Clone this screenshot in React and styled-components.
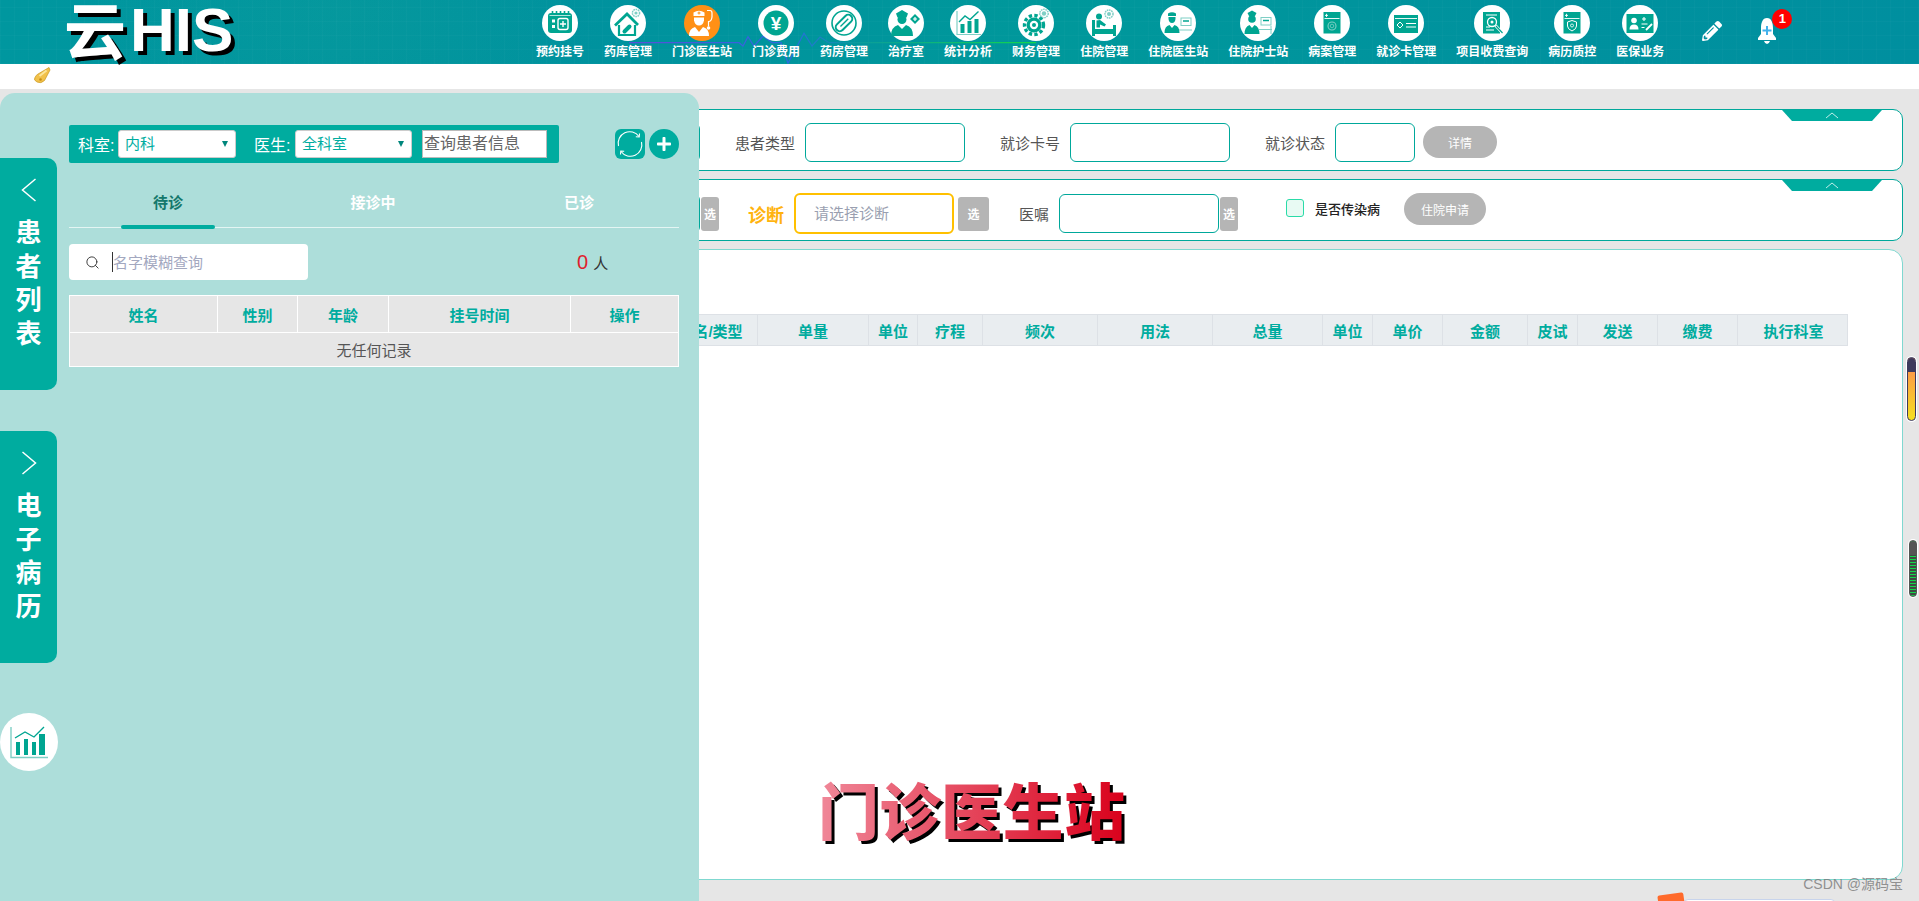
import React from 'react';
import styled, { createGlobalStyle } from 'styled-components';
import { FaPencilAlt, FaPlus } from 'react-icons/fa';
import { Search } from 'lucide-react';

const TEAL = '#00ac9f';
const ICON = '#00a591';
const SOFT = '#7fcfc5';
const FONT = '"Liberation Sans", "Noto Sans CJK SC", sans-serif';

const GlobalStyle = createGlobalStyle`
  html, body {
    margin: 0;
    height: 100%;
    overflow: hidden;
    background: #e6e6e6;
  }
  #root {
    height: 100%;
  }
  * {
    box-sizing: border-box;
  }
`;

const Page = styled.div`
  position: relative;
  height: 100vh;
  display: flex;
  flex-direction: column;
  overflow: hidden;
  font-family: ${FONT};
  background: #e6e6e6;
`;

/* ---- header ---- */
const Header = styled.header`
  position: relative;
  flex: none;
  height: 64px;
  display: flex;
  padding-left: 65px;
  background:
    repeating-linear-gradient(90deg, rgba(255, 255, 255, 0.018) 0 1px, transparent 1px 14px),
    repeating-linear-gradient(0deg, rgba(255, 255, 255, 0.018) 0 1px, transparent 1px 14px),
    radial-gradient(260px 160px at 345px 10px, rgba(30, 170, 150, 0.18), transparent),
    linear-gradient(100deg, #00979f 0%, #00929e 30%, #00989b 55%, #00929e 78%, #008f9f 100%);
`;

const Pulse = styled.svg`
  position: absolute;
  left: 0;
  top: 0;
  pointer-events: none;
`;

const Logo = styled.div`
  position: relative;
  width: 471px;
  flex: none;
  display: flex;
  align-items: flex-start;
  color: #fff;
  text-shadow: 4px 4px 0 #000;
  font-weight: 700;
`;

const LogoHan = styled.span`
  font-family: "Noto Sans CJK SC", sans-serif;
  font-size: 62px;
  line-height: 56px;
  margin-left: -1px;
`;

const LogoLatin = styled.span`
  font-family: "Liberation Sans", sans-serif;
  font-size: 62px;
  line-height: 60px;
  margin-left: 4px;
`;

const Nav = styled.nav`
  position: relative;
  display: flex;
  gap: 20px;
`;

const NavItem = styled.div`
  display: flex;
  flex-direction: column;
  align-items: center;
  padding-top: 5px;
`;

const NavDisc = styled.div`
  width: 36px;
  height: 36px;
  border-radius: 50%;
  background: ${(p) => (p.$active ? '#ff9015' : '#fff')};
  svg {
    display: block;
  }
`;

const NavLabel = styled.span`
  margin-top: 3px;
  font-size: 12px;
  line-height: 16px;
  font-weight: 700;
  color: #fff;
  white-space: nowrap;
`;

const Tools = styled.div`
  position: relative;
  display: flex;
  align-items: flex-start;
  margin-left: 38px;
`;

const PencilWrap = styled.div`
  margin-top: 21px;
  color: #fff;
  font-size: 20px;
  line-height: 0;
`;

const BellWrap = styled.div`
  position: relative;
  margin-top: 18px;
  margin-left: 35px;
  line-height: 0;
`;

const Badge = styled.span`
  position: absolute;
  left: 15px;
  top: -9px;
  width: 20px;
  height: 20px;
  border-radius: 50%;
  background: #f00;
  color: #fff;
  font-size: 13px;
  font-weight: 700;
  line-height: 20px;
  text-align: center;
`;

const Notice = styled.div`
  flex: none;
  height: 25px;
  padding: 3px 0 0 34px;
  background: #fff;
  line-height: 0;
`;

/* ---- work area behind the drawer ---- */
const Work = styled.div`
  position: relative;
  flex: 1;
  min-height: 0;
`;

const Main = styled.main`
  height: 100%;
  display: flex;
  flex-direction: column;
  gap: 8px;
  padding: 20px 16px 0 600px;
`;

const FormCard = styled.section`
  position: relative;
  flex: none;
  height: 62px;
  display: flex;
  align-items: center;
  padding-left: 19px;
  padding-top: ${(p) => p.$pt}px;
  background: #fff;
  border: 1px solid #00a89b;
  border-radius: 10px;
`;

const Collapse = styled.div`
  position: absolute;
  top: 0;
  right: 20px;
  width: 100px;
  height: 11px;
  display: flex;
  justify-content: center;
  background: ${TEAL};
  clip-path: polygon(0 0, 100% 0, 90% 100%, 10% 100%);
`;

const Field = styled.div`
  display: flex;
  align-items: center;
  margin-left: ${(p) => p.$ml || 0}px;
`;

const FieldLabel = styled.label`
  margin-right: 10px;
  font-size: 15px;
  color: #555;
  white-space: nowrap;
`;

const DiagnosisLabel = styled(FieldLabel)`
  font-size: 18px;
  font-weight: 700;
  color: #ffb30f;
`;

const TextBox = styled.input`
  width: ${(p) => p.$w}px;
  height: 39px;
  padding: 0 18px;
  background: #fff;
  border: 1px solid #00a89b;
  border-radius: 6px;
  outline: none;
  font-family: ${FONT};
  font-size: 15px;
`;

const DiagnosisBox = styled(TextBox)`
  height: 41px;
  border: 2px solid #ffc000;
  &::placeholder {
    color: #9a9fb0;
    opacity: 1;
  }
`;

const PickButton = styled.button`
  width: ${(p) => p.$w}px;
  height: 34px;
  margin-left: ${(p) => p.$ml}px;
  padding: 0;
  border: 0;
  border-radius: 3px;
  background: #b5b5b5;
  color: #fff;
  font-family: ${FONT};
  font-size: 12px;
  font-weight: 700;
`;

const PillButton = styled.button`
  width: ${(p) => p.$w}px;
  height: 32px;
  margin-left: ${(p) => p.$ml}px;
  margin-top: ${(p) => p.$mt || 0}px;
  padding: 0;
  border: 0;
  border-radius: 16px;
  background: #b5b5b5;
  color: #fff;
  font-family: ${FONT};
  font-size: 12px;
`;

const CheckRow = styled.div`
  display: flex;
  align-items: center;
  gap: 11px;
  margin-left: 48px;
  margin-top: -11px;
  font-size: 13px;
  color: #222;
  font-weight: 500;
  white-space: nowrap;
`;

const CheckBox = styled.span`
  width: 18px;
  height: 18px;
  background: #e8faf3;
  border: 1px solid #2adba8;
  border-radius: 3px;
`;

const ListCard = styled.section`
  position: relative;
  flex: 1;
  min-height: 0;
  padding: 64px 0 0 62px;
  background: #fff;
  border: 1px solid #7fd8d0;
  border-radius: 14px;
`;

const OrderHead = styled.div`
  display: grid;
  grid-template-columns: 94px 111px 49px 65px 115px 115px 110px 50px 70px 85px 50px 80px 80px 111px;
  width: 1185px;
  height: 32px;
  background: #e9edf0;
  border: 1px solid #dde1e6;
`;

const OrderCol = styled.div`
  display: flex;
  align-items: center;
  justify-content: center;
  border-right: 1px solid #dde1e6;
  font-size: 15px;
  font-weight: 700;
  color: ${TEAL};
  white-space: nowrap;
  &:last-child {
    border-right: 0;
  }
`;

const Toast = styled.div`
  position: absolute;
  left: 217px;
  top: 523px;
  font-family: "Noto Sans CJK SC", sans-serif;
  font-size: 61px;
  line-height: 72px;
  letter-spacing: 0.5px;
  font-weight: 900;
  white-space: nowrap;
  color: transparent;
  background: linear-gradient(90deg, #f08899 0%, #d9001b 100%);
  -webkit-background-clip: text;
  background-clip: text;
  filter: drop-shadow(3px 3px 0 #000);
`;

const FooterPeek = styled.div`
  flex: none;
  height: 21px;
  margin-top: -8px;
  display: flex;
  justify-content: flex-end;
  align-items: flex-start;
  overflow: hidden;
  padding: 14px 68px 0 0;
`;

const PeekTag = styled.span`
  width: 26px;
  height: 12px;
  background: #ff6a2b;
  border-radius: 2px;
  transform: rotate(-8deg);
`;

const PeekBox = styled.span`
  width: 151px;
  height: 12px;
  margin-top: 5px;
  background: #fff;
  border: 1px solid #c8d4ec;
  border-radius: 4px;
`;

/* little gauges hanging on the right edge */
const Gauge = styled.div`
  position: absolute;
  width: ${(p) => p.$w}px;
  height: ${(p) => p.$h}px;
  right: ${(p) => p.$right}px;
  top: ${(p) => p.$top}px;
  border: 1px solid ${(p) => p.$edge};
  border-radius: 5px;
  background: ${(p) => p.$bg};
  box-shadow: 0 0 0 1px #fff;
  overflow: hidden;
`;

const GaugeCap = styled.div`
  height: ${(p) => p.$h}px;
  background: ${(p) => p.$bg};
`;

const Watermark = styled.div`
  position: absolute;
  right: 16px;
  bottom: 8px;
  font-size: 14px;
  line-height: 18px;
  color: rgba(120, 120, 120, 0.8);
  white-space: nowrap;
`;

/* ---- patient drawer ---- */
const Drawer = styled.aside`
  position: absolute;
  left: 0;
  top: 4px;
  bottom: 0;
  width: 699px;
  display: flex;
  background: #addeda;
  border-radius: 15px 15px 0 0;
`;

const Rail = styled.div`
  flex: none;
  width: 57px;
  display: flex;
  flex-direction: column;
  padding-top: 65px;
`;

const RailTab = styled.div`
  height: 232px;
  margin-bottom: ${(p) => p.$mb}px;
  display: flex;
  flex-direction: column;
  align-items: center;
  padding-top: 20px;
  background: ${TEAL};
  border-radius: 0 10px 10px 0;
  color: #fff;
`;

const RailText = styled.div`
  margin-top: ${(p) => p.$mt}px;
  width: 26px;
  font-size: 26px;
  line-height: 33.5px;
  font-weight: 700;
  text-align: center;
`;

const ChartDisc = styled.div`
  width: 58px;
  height: 58px;
  display: flex;
  align-items: center;
  justify-content: center;
  border-radius: 50%;
  background: #fff;
`;

const DrawerBody = styled.div`
  width: 610px;
  margin-left: 12px;
  padding-top: 32px;
`;

const FilterRow = styled.div`
  display: flex;
  align-items: center;
  justify-content: space-between;
`;

const FilterBar = styled.div`
  width: 490px;
  height: 38px;
  display: flex;
  align-items: center;
  padding-left: 9px;
  background: ${TEAL};
  border-radius: 2px;
  color: #fff;
  font-size: 15px;
  white-space: nowrap;
`;

const FilterLabel = styled.span`
  width: 36px;
  margin-right: ${(p) => p.$mr}px;
  margin-left: ${(p) => p.$ml || 0}px;
  font-size: 16px;
`;

const FakeSelect = styled.div`
  position: relative;
  width: ${(p) => p.$w}px;
  height: 28px;
  padding-left: 6px;
  background: #fff;
  border: 1px solid #ccc;
  border-radius: 3px;
  color: ${TEAL};
  line-height: 26px;
  &::after {
    content: '';
    position: absolute;
    right: 7px;
    top: 10px;
    border-left: 3px solid transparent;
    border-right: 3px solid transparent;
    border-top: 6px solid #00867c;
  }
`;

const QueryInput = styled.input`
  width: 125px;
  height: 28px;
  margin-left: 10px;
  padding: 0 1px;
  background: #fff;
  border: 1px solid #bbb;
  outline: none;
  font-family: ${FONT};
  font-size: 16px;
  &::placeholder {
    color: #666;
    opacity: 1;
  }
`;

const RoundButtons = styled.div`
  display: flex;
  gap: 4px;
`;

const IconButton = styled.button`
  width: 30px;
  height: 30px;
  display: flex;
  align-items: center;
  justify-content: center;
  padding: 0;
  border: 0;
  border-radius: ${(p) => (p.$round ? '50%' : '6px')};
  background: ${TEAL};
  color: #fff;
  font-size: 16px;
`;

const Tabs = styled.div`
  display: grid;
  grid-template-columns: 198px 212px 200px;
  height: 49px;
  margin-top: 16px;
  border-bottom: 1px solid #e4f5f3;
`;

const Tab = styled.div`
  position: relative;
  text-align: center;
  line-height: 48px;
  font-size: 15px;
  font-weight: 700;
  color: ${(p) => (p.$active ? '#14786c' : '#fff')};
  &::after {
    content: '';
    display: ${(p) => (p.$active ? 'block' : 'none')};
    position: absolute;
    left: 52px;
    bottom: -2px;
    width: 94px;
    height: 4px;
    border-radius: 2px;
    background: ${TEAL};
  }
`;

const SearchRow = styled.div`
  display: flex;
  align-items: center;
  margin-top: 16px;
`;

const SearchBox = styled.div`
  width: 239px;
  height: 36px;
  display: flex;
  align-items: center;
  padding-left: 16px;
  background: #fff;
  border-radius: 4px;
  color: #333;
`;

const Caret = styled.span`
  width: 1px;
  height: 20px;
  margin-left: 12px;
  background: #333;
`;

const SearchInput = styled.input`
  width: 170px;
  padding: 0;
  border: 0;
  outline: none;
  font-family: ${FONT};
  font-size: 15px;
  &::placeholder {
    color: #a3a8bf;
    opacity: 1;
  }
`;

const Counter = styled.div`
  margin-left: 269px;
  display: flex;
  align-items: baseline;
  gap: 5px;
  font-size: 15px;
  color: #333;
`;

const CounterNum = styled.span`
  font-size: 20px;
  color: #e0202c;
`;

const PatientTable = styled.table`
  width: 609px;
  margin-top: 15px;
  table-layout: fixed;
  border-collapse: collapse;
  background: #e6e6e6;
  font-size: 15px;
  th, td {
    padding: 0;
    border: 1px solid #fff;
    text-align: center;
  }
  th {
    height: 37px;
    color: ${TEAL};
    font-weight: 700;
  }
  td {
    height: 34px;
    color: #555;
  }
`;

/* ---- icons ---- */
const Svg = ({ children }) => (
  <svg width="36" height="36" viewBox="0 0 36 36" fill="none">
    {children}
  </svg>
);

const Ring = ({ cx, cy, r = 3.6 }) => (
  <>
    <circle cx={cx} cy={cy} r={r} stroke={SOFT} strokeWidth="1.5" strokeDasharray="1.6 0.7" />
    <circle cx={cx} cy={cy} r={r - 2} fill={SOFT} />
  </>
);

const icons = {
  calendar: (
    <Svg>
      <rect x="6" y="8" width="24" height="20" rx="3" fill={ICON} />
      <path d="M10.5 6v4M14.5 6v4M18.5 6v4M22.5 6v4M26.500 6v4" stroke={ICON} strokeWidth="1.6" />
      <path d="M7.500 10.500h21" stroke="#fff" strokeWidth="0.7" />
      <path d="M10 14.500h3v3h-3zM10 20h3v3h-3z" fill="#fff" />
      <rect x="16" y="13.500" width="10" height="11" rx="2" stroke="#fff" strokeWidth="1.4" />
      <path d="M21 16v6M18 19h6" stroke="#fff" strokeWidth="1.4" />
    </Svg>
  ),
  store: (
    <Svg>
      <path d="M5 20.500 17 9l11 11" stroke={ICON} strokeWidth="2.8" />
      <path d="M9 20v10h16V20" stroke={ICON} strokeWidth="2.2" />
      <path d="m14.500 26.500 5-5" stroke={ICON} strokeWidth="4" strokeLinecap="round" />
      <Ring cx={26} cy={8} />
    </Svg>
  ),
  doctor: (
    <Svg>
      <path d="M9.500 11V7.500q5.500-3.500 11 0V11z" fill="#fff" />
      <path d="M15 6.500v3M13.500 8h3" stroke="#ff9015" strokeWidth="1" />
      <path d="M10 12.500h10v3q-1 5-5 5t-5-5z" fill="#fff" />
      <path d="M5 31q0-7.500 6-9l4 5 4-5q6 1.500 6 9z" fill="#fff" />
      <path d="M23 5.500h3q2 0 2 2.500v4q-.5 4.500-3.500 4.500v5" stroke="#fff" strokeWidth="1.2" />
      <circle cx="24.500" cy="23" r="1.800" fill="#fff" />
    </Svg>
  ),
  money: (
    <Svg>
      <circle cx="18" cy="18" r="12.500" fill={ICON} />
      <text x="18" y="24.500" textAnchor="middle" fontSize="19" fontWeight="700" fontFamily="Liberation Sans" fill="#fff">
        ¥
      </text>
    </Svg>
  ),
  pill: (
    <Svg>
      <circle cx="18" cy="18" r="12" stroke={ICON} strokeWidth="1.6" />
      <g transform="rotate(45 18 18)">
        <rect x="14" y="8" width="8" height="20" rx="4" stroke={ICON} strokeWidth="2" />
        <path d="M18 12v11" stroke={ICON} strokeWidth="1.4" />
      </g>
    </Svg>
  ),
  nurse: (
    <Svg>
      <path d="M8 8.500 14 5l6 3.500-1.500 4h-9z" fill={ICON} />
      <circle cx="14" cy="14.500" r="4.500" fill={ICON} />
      <path d="M3 31q0-9 7-11l4 4 4-4q7 2 7 11z" fill={ICON} />
      <path d="m27 9 5 5-5 5-5-5z" fill={ICON} />
      <path d="M27 12v4M25 14h4" stroke="#fff" strokeWidth="1.2" />
    </Svg>
  ),
  chart: (
    <Svg>
      <path d="M7 6v23.500h24" stroke={SOFT} strokeWidth="1.2" />
      <path d="M10.500 19h4v9h-4zM17.500 16h4v12h-4zM24.500 14h4v14h-4z" fill={ICON} />
      <path d="m9 17 6-6 5 3.500 8.500-8" stroke={ICON} strokeWidth="1.4" />
    </Svg>
  ),
  finance: (
    <Svg>
      <circle cx="16" cy="20" r="9.500" stroke={ICON} strokeWidth="3.400" strokeDasharray="3.300 2.300" />
      <circle cx="16" cy="20" r="7.500" fill={ICON} />
      <circle cx="16" cy="20" r="4.200" fill="#fff" />
      <circle cx="16" cy="20" r="2" fill={ICON} />
      <Ring cx={26} cy={8.500} r={4.200} />
    </Svg>
  ),
  ward: (
    <Svg>
      <path d="M6 15h3v16H6zM27 20h3v11h-3zM9 24h18v5H9z" fill={ICON} />
      <circle cx="13" cy="11.500" r="3" fill={ICON} />
      <path d="M10.500 15.500 14 15l6 4.500-1.500 2-4.500-2v3h-3.500z" fill={ICON} />
      <Ring cx={23} cy={9} r={4} />
    </Svg>
  ),
  wardDoctor: (
    <Svg>
      <path d="M8 8.500q4-2.500 8 0V11H8z" fill={ICON} />
      <path d="M8.500 12h7v2q-.5 4-3.500 4t-3.500-4z" fill={ICON} />
      <path d="M4.500 28q0-7 5-8l2.500 3 2.500-3q5 1 5 8z" fill={ICON} />
      <rect x="21" y="13" width="10" height="7.500" stroke={SOFT} strokeWidth="1" />
      <path d="M23 16h6" stroke={ICON} strokeWidth="1.500" />
      <path d="M19 25h13" stroke={SOFT} strokeWidth="1" />
    </Svg>
  ),
  wardNurse: (
    <Svg>
      <path d="M7.500 8 12 5.500 16.500 8 15 11H9z" fill={ICON} />
      <circle cx="12" cy="14" r="3.800" fill={ICON} />
      <path d="M4.500 29q0-7 5-9l2.500 3 2.500-3q5 2 5 9z" fill={ICON} />
      <rect x="21" y="12.500" width="10" height="7.500" stroke={SOFT} strokeWidth="1" />
      <path d="M23 15.500h6" stroke={ICON} strokeWidth="1.500" />
      <path d="M19 24.500h13M31 21v8" stroke={SOFT} strokeWidth="1" />
    </Svg>
  ),
  record: (
    <Svg>
      <rect x="9.500" y="7" width="17" height="21.500" fill={ICON} />
      <path d="M12.500 8.800v3.200M11 10.400h3M10.500 13.500h15" stroke="#fff" strokeWidth="0.9" />
      <circle cx="18" cy="21" r="4" stroke={SOFT} strokeWidth="1.100" />
      <circle cx="18" cy="21" r="1.800" stroke={SOFT} strokeWidth="0.8" />
    </Svg>
  ),
  card: (
    <Svg>
      <rect x="6" y="10" width="24" height="18" fill={ICON} />
      <path d="M7 13.500h22" stroke="#fff" strokeWidth="0.9" />
      <path d="m12 17 3 3-3 3-3-3z" stroke="#fff" strokeWidth="1" />
      <path d="M18 18.500h10M18 22h10" stroke="#fff" strokeWidth="1.200" />
    </Svg>
  ),
  query: (
    <Svg>
      <rect x="9" y="7" width="17" height="21.500" fill={ICON} />
      <path d="M12 10h11M12 25h8M12 22h4" stroke="#fff" strokeWidth="1" />
      <circle cx="18" cy="17" r="4.500" stroke="#fff" strokeWidth="1.300" />
      <circle cx="18" cy="17" r="1.500" fill="#fff" />
      <path d="m21.500 20.500 7 7.500" stroke="#fff" strokeWidth="2.600" />
      <path d="m22 21 6.500 7" stroke={ICON} strokeWidth="1.200" />
    </Svg>
  ),
  shield: (
    <Svg>
      <rect x="9.500" y="7" width="17" height="21.500" fill={ICON} />
      <path d="M12.500 8.800v3.200M11 10.400h3M10.500 13.500h15" stroke="#fff" strokeWidth="0.9" />
      <path d="M18 15.500 22.500 17v4q0 3-4.500 5-4.500-2-4.500-5v-4z" stroke="#fff" strokeWidth="1" />
      <circle cx="18" cy="20.500" r="1.500" stroke="#fff" strokeWidth="0.8" />
    </Svg>
  ),
  insurance: (
    <Svg>
      <rect x="4.500" y="9" width="27" height="19" fill={ICON} />
      <circle cx="12" cy="15.500" r="2.800" fill="#fff" />
      <path d="M7.500 24.500q0-5 4.500-5t4.500 5z" fill="#fff" />
      <path d="M22 12v4M20 14h4M19.500 19h6M19.500 22.500h3" stroke="#fff" strokeWidth="1.100" />
      <path d="m24 25 6-6" stroke="#fff" strokeWidth="1.800" />
    </Svg>
  ),
};

const navItems = [
  ['预约挂号', 'calendar'],
  ['药库管理', 'store'],
  ['门诊医生站', 'doctor', true],
  ['门诊费用', 'money'],
  ['药房管理', 'pill'],
  ['治疗室', 'nurse'],
  ['统计分析', 'chart'],
  ['财务管理', 'finance'],
  ['住院管理', 'ward'],
  ['住院医生站', 'wardDoctor'],
  ['住院护士站', 'wardNurse'],
  ['病案管理', 'record'],
  ['就诊卡管理', 'card'],
  ['项目收费查询', 'query'],
  ['病历质控', 'shield'],
  ['医保业务', 'insurance'],
];

const orderCols = ['药名/类型', '单量', '单位', '疗程', '频次', '用法', '总量', '单位', '单价', '金额', '皮试', '发送', '缴费', '执行科室'];

const HeartLine = () => (
  <Pulse width="1100" height="64" fill="none">
    <defs>
      <linearGradient id="pulseStroke" gradientUnits="userSpaceOnUse" x1="629" y1="0" x2="1036" y2="0">
        <stop offset="0" stopColor="#5a4fd8" />
        <stop offset="0.4" stopColor="#2a6ae0" />
        <stop offset="0.55" stopColor="#0a9aa0" />
        <stop offset="1" stopColor="#12d84a" />
      </linearGradient>
    </defs>
    <path
      d="M629 42.700H739L743 46 748 36.700 754 46 763 36 772 42.700H781L788 63.300 804 33.300 812 46 820 37 829 42.700H1036"
      stroke="url(#pulseStroke)"
      strokeWidth="1.200"
    />
  </Pulse>
);

const Bell = () => (
  <svg width="20" height="26" viewBox="0 0 20 26">
    <path d="M10 0C5.500 0 4 5 4 10v6l-3 4v2h18v-2l-3-4v-6c0-5-1.500-10-6-10z" fill="#fff" />
    <path d="M7 23h6q-1 3-3 3t-3-3z" fill="#fff" />
    <path d="M10 8v9M5.500 12.500h9" stroke="#43b1ec" strokeWidth="2" />
  </svg>
);

const Horn = () => (
  <svg width="17" height="17" viewBox="0 0 17 17">
    <path d="M15 .5 16 3l-5.500 10.500q-3.500 3.500-7.500 1.500T1 10.500Q2 8 4 7z" fill="#f2c14a" stroke="#c9981f" strokeWidth="0.7" />
    <path d="M12.500 3.500 5.500 9" stroke="#fbe59a" strokeWidth="2" />
    <circle cx="6.500" cy="12.500" r="1.300" fill="#c68d14" />
  </svg>
);

const Refresh = () => (
  <svg width="28" height="28" viewBox="0 0 28 28" fill="none" stroke="#fff" strokeWidth="1.100">
    <path d="M2.500 16A11.500 11.500 0 0 1 23 6.500" />
    <path d="m19.800 6.800 3.400.2.300-3.500" />
    <path d="M25.500 12A11.500 11.500 0 0 1 5 21.500" />
    <path d="m8.200 21.200-3.400-.2-.3 3.500" />
  </svg>
);

const ChevronLeftThin = () => (
  <svg width="16" height="24" viewBox="0 0 16 24" fill="none" stroke="#fff" strokeWidth="1.500">
    <path d="M14.500 1 1.500 12l13 11" />
  </svg>
);

const ChevronRightThin = () => (
  <svg width="16" height="24" viewBox="0 0 16 24" fill="none" stroke="#fff" strokeWidth="1.500">
    <path d="M1.500 1l13 11-13 11" />
  </svg>
);

const ChevronUpSmall = () => (
  <svg width="14" height="8" viewBox="0 0 14 8" fill="none" stroke="#bfeeea" strokeWidth="1" style={{ marginTop: 1 }}>
    <path d="M1 7l6-5 6 5" />
  </svg>
);

const ChartLarge = () => (
  <svg width="42" height="34" viewBox="0 0 42 34" fill="none" style={{ marginLeft: 2 }}>
    <path d="M2 2v30.500h37" stroke={SOFT} strokeWidth="1.400" />
    <path d="M7 17h4v13H7zM15 14h4v16h-4zM23 17h4v13h-4zM30 9h6v21h-6z" fill={ICON} />
    <path d="m6 13 10-6 9 5 10-10" stroke={ICON} strokeWidth="1.400" />
  </svg>
);

export default function App() {
  return (
    <Page>
      <GlobalStyle />
      <Header>
        <HeartLine />
        <Logo>
          <LogoHan>云</LogoHan>
          <LogoLatin>HIS</LogoLatin>
        </Logo>
        <Nav>
          {navItems.map(([label, icon, active]) => (
            <NavItem key={label}>
              <NavDisc $active={active}>{icons[icon]}</NavDisc>
              <NavLabel>{label}</NavLabel>
            </NavItem>
          ))}
        </Nav>
        <Tools>
          <PencilWrap>
            <FaPencilAlt />
          </PencilWrap>
          <BellWrap>
            <Bell />
            <Badge>1</Badge>
          </BellWrap>
        </Tools>
      </Header>
      <Notice>
        <Horn />
      </Notice>

      <Work>
        <Main>
          <FormCard $pt={4}>
            <TextBox $w={80} />
            <Field $ml={35}>
              <FieldLabel>患者类型</FieldLabel>
              <TextBox $w={160} />
            </Field>
            <Field $ml={35}>
              <FieldLabel>就诊卡号</FieldLabel>
              <TextBox $w={160} />
            </Field>
            <Field $ml={35}>
              <FieldLabel>就诊状态</FieldLabel>
              <TextBox $w={80} />
            </Field>
            <PillButton $w={74} $ml={8}>详情</PillButton>
            <Collapse>
              <ChevronUpSmall />
            </Collapse>
          </FormCard>
          <FormCard $pt={7}>
            <TextBox $w={80} />
            <PickButton $w={18} $ml={1}>选</PickButton>
            <Field $ml={29}>
              <DiagnosisLabel>诊断</DiagnosisLabel>
              <DiagnosisBox $w={160} placeholder="请选择诊断" />
              <PickButton $w={31} $ml={4}>选</PickButton>
            </Field>
            <Field $ml={30}>
              <FieldLabel>医嘱</FieldLabel>
              <TextBox $w={160} />
              <PickButton $w={18} $ml={1}>选</PickButton>
            </Field>
            <CheckRow>
              <CheckBox />
              是否传染病
            </CheckRow>
            <PillButton $w={82} $ml={24} $mt={-9}>住院申请</PillButton>
            <Collapse>
              <ChevronUpSmall />
            </Collapse>
          </FormCard>
          <ListCard>
            <OrderHead>
              {orderCols.map((c, i) => (
                <OrderCol key={i}>{c}</OrderCol>
              ))}
            </OrderHead>
            <Toast>门诊医生站</Toast>
          </ListCard>
          <FooterPeek>
            <PeekTag />
            <PeekBox />
          </FooterPeek>
        </Main>

        <Drawer>
          <Rail>
            <RailTab $mb={41}>
              <ChevronLeftThin />
              <RailText $mt={15}>患者列表</RailText>
            </RailTab>
            <RailTab $mb={50}>
              <ChevronRightThin />
              <RailText $mt={15}>电子病历</RailText>
            </RailTab>
            <ChartDisc>
              <ChartLarge />
            </ChartDisc>
          </Rail>
          <DrawerBody>
            <FilterRow>
              <FilterBar>
                <FilterLabel $mr={4}>科室:</FilterLabel>
                <FakeSelect $w={118}>内科</FakeSelect>
                <FilterLabel $mr={5} $ml={18}>医生:</FilterLabel>
                <FakeSelect $w={117}>全科室</FakeSelect>
                <QueryInput placeholder="查询患者信息" />
              </FilterBar>
              <RoundButtons>
                <IconButton>
                  <Refresh />
                </IconButton>
                <IconButton $round>
                  <FaPlus />
                </IconButton>
              </RoundButtons>
            </FilterRow>
            <Tabs>
              <Tab $active>待诊</Tab>
              <Tab>接诊中</Tab>
              <Tab>已诊</Tab>
            </Tabs>
            <SearchRow>
              <SearchBox>
                <Search size={15} strokeWidth={1.5} />
                <Caret />
                <SearchInput placeholder="名字模糊查询" />
              </SearchBox>
              <Counter>
                <CounterNum>0</CounterNum>人
              </Counter>
            </SearchRow>
            <PatientTable>
              <colgroup>
                <col width="148" />
                <col width="80" />
                <col width="91" />
                <col width="182" />
                <col width="108" />
              </colgroup>
              <thead>
                <tr>
                  <th>姓名</th>
                  <th>性别</th>
                  <th>年龄</th>
                  <th>挂号时间</th>
                  <th>操作</th>
                </tr>
              </thead>
              <tbody>
                <tr>
                  <td colSpan="5">无任何记录</td>
                </tr>
              </tbody>
            </PatientTable>
          </DrawerBody>
        </Drawer>

        <Gauge $w={9} $h={64} $right={3} $top={268} $edge="#3d3a5c" $bg="linear-gradient(#ff8a50, #f5e020)">
          <GaugeCap $h={14} $bg="#3d3a5c" />
        </Gauge>
        <Gauge $w={8} $h={57} $right={2} $top={451} $edge="#555" $bg="repeating-linear-gradient(#12d84a 0 1px, #3f4a44 1px 3px)">
          <GaugeCap $h={14} $bg="#555" />
        </Gauge>
      </Work>
      <Watermark>CSDN @源码宝</Watermark>
    </Page>
  );
}
